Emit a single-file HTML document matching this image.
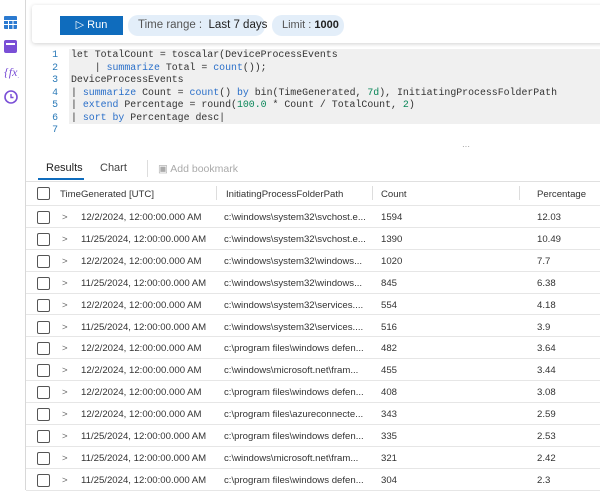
<!DOCTYPE html>
<html><head><style>
body{margin:0;width:600px;height:495px;background:#fff;position:relative;overflow:hidden;font-family:"Liberation Sans",sans-serif;}
.abs{position:absolute}
.vline{left:25px;top:0;width:1px;height:490px;background:#d8d8d8}
.card{left:32px;top:5px;width:580px;height:38px;background:#fff;box-shadow:0 1px 4px rgba(0,0,0,.18);border-radius:3px}
.run{left:60px;top:16px;width:63px;height:19px;background:#0f6cbd;color:#fff;font-size:11px;line-height:19px;text-align:center}
.pill{top:15px;height:21px;background:#e3eef9;border-radius:10px;font-size:11px;line-height:21px;color:#555;white-space:nowrap;box-sizing:border-box;padding-left:10px}
.code{font-family:"Liberation Mono",monospace;font-size:9.9px;color:#333;white-space:pre}
.ln{left:48px;width:10px;text-align:right;color:#2b7ab8;font-family:"Liberation Mono",monospace;font-size:9.9px}
.hl{left:69px;width:531px;background:#f0f0f0}
.k{color:#2a6fc9}.n{color:#098658}
.row{left:26px;width:574px;height:22px;border-bottom:1px solid #e6e6e6;font-size:9.6px;color:#333}
.row span{position:absolute;top:6px;white-space:nowrap}
.cb{position:absolute;left:11px;top:5px;width:11px;height:11px;border:1px solid #555;border-radius:2px}
</style></head><body>
<div class="abs vline"></div>
<svg class="abs" style="left:3px;top:16px" width="16" height="90" viewBox="0 0 16 90">
<rect x="1" y="0" width="13" height="13" fill="#2b7ad0" rx="1"/><path d="M1 4.5H14M1 8.5H14M5.5 4.5V13M10 4.5V13" stroke="#fff" stroke-width="1"/>
<rect x="1" y="24" width="13" height="13" fill="#7a4fd6" rx="2"/><rect x="3" y="27" width="9" height="2" fill="#fff"/>
<text x="1" y="60" font-size="12" font-style="italic" fill="#7a4fd6" font-family="Liberation Serif">{fx}</text>
<circle cx="8" cy="81" r="6" fill="none" stroke="#7a4fd6" stroke-width="1.6"/><path d="M8 78V81.5H10.5" stroke="#7a4fd6" stroke-width="1.4" fill="none"/>
</svg>
<div class="abs card"></div>
<div class="abs run">▷ Run</div>
<div class="abs pill" style="left:128px;width:137px;font-size:11.5px">Time range :&nbsp; <span style="color:#222">Last 7 days</span></div>
<div class="abs pill" style="left:272px;width:72px">Limit : <b style="color:#222">1000</b></div>
<div class="abs hl" style="top:49px;height:75px"></div>
<div class="abs ln" style="top:49px;line-height:12.5px">1<br>2<br>3<br>4<br>5<br>6<br>7</div>
<div class="abs code" style="left:71px;top:49px;line-height:12.5px">let TotalCount = toscalar(DeviceProcessEvents
    | <span class="k">summarize</span> Total = <span class="k">count</span>());
DeviceProcessEvents
| <span class="k">summarize</span> Count = <span class="k">count</span>() <span class="k">by</span> bin(TimeGenerated, <span class="n">7d</span>), InitiatingProcessFolderPath
| <span class="k">extend</span> Percentage = round(<span class="n">100.0</span> * Count / TotalCount, <span class="n">2</span>)
| <span class="k">sort by</span> Percentage desc|</div>
<div class="abs" style="left:462px;top:142px;font-size:8px;color:#888">···</div>
<div class="abs" style="left:46px;top:162px;font-size:11px;color:#222">Results</div>
<div class="abs" style="left:38px;top:178px;width:46px;height:2px;background:#0f6cbd"></div>
<div class="abs" style="left:100px;top:162px;font-size:11px;color:#444">Chart</div>
<div class="abs" style="left:147px;top:160px;width:1px;height:17px;background:#ddd"></div>
<div class="abs" style="left:158px;top:163px;font-size:10.5px;color:#aaa">▣ Add bookmark</div>
<div class="abs" style="left:26px;top:181px;width:574px;height:1px;background:#e0e0e0"></div>
<div class="abs row" style="top:182px;height:23px">
<div class="cb"></div><span style="left:34px;top:7px">TimeGenerated [UTC]</span>
<span style="left:190px;top:4px;width:1px;height:14px;background:#ddd"></span>
<span style="left:200px;top:7px">InitiatingProcessFolderPath</span>
<span style="left:346px;top:4px;width:1px;height:14px;background:#ddd"></span>
<span style="left:355px;top:7px">Count</span>
<span style="left:493px;top:4px;width:1px;height:14px;background:#ddd"></span>
<span style="left:511px;top:7px">Percentage</span>
</div>
<div id="rows"></div>
<script>
var d=[["12/2/2024","c:\\windows\\system32\\svchost.e...","1594","12.03"],["11/25/2024","c:\\windows\\system32\\svchost.e...","1390","10.49"],["12/2/2024","c:\\windows\\system32\\windows...","1020","7.7"],["11/25/2024","c:\\windows\\system32\\windows...","845","6.38"],["12/2/2024","c:\\windows\\system32\\services....","554","4.18"],["11/25/2024","c:\\windows\\system32\\services....","516","3.9"],["12/2/2024","c:\\program files\\windows defen...","482","3.64"],["12/2/2024","c:\\windows\\microsoft.net\\fram...","455","3.44"],["12/2/2024","c:\\program files\\windows defen...","408","3.08"],["12/2/2024","c:\\program files\\azureconnecte...","343","2.59"],["11/25/2024","c:\\program files\\windows defen...","335","2.53"],["11/25/2024","c:\\windows\\microsoft.net\\fram...","321","2.42"],["11/25/2024","c:\\program files\\windows defen...","304","2.3"]];
var h="";d.forEach(function(r,i){var t=206+i*21.9;h+='<div class="abs row" style="top:'+t+'px;height:20.9px"><div class="cb"></div><span style="left:36px;color:#666">&gt;</span><span style="left:55px">'+r[0]+', 12:00:00.000 AM</span><span style="left:198px">'+r[1]+'</span><span style="left:355px">'+r[2]+'</span><span style="left:511px">'+r[3]+'</span></div>';});
document.getElementById("rows").innerHTML=h;
</script>
</body></html>
